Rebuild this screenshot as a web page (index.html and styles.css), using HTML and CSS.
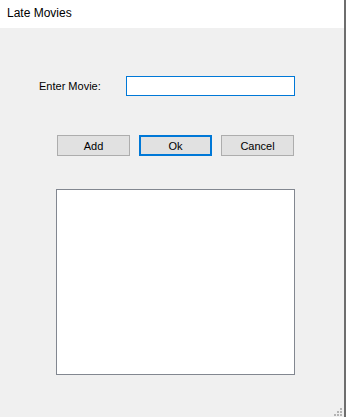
FILE: index.html
```html
<!doctype html>
<html>
<head>
    <meta charset="UTF-8">
    <meta name="viewport" content="width=device-width, initial-scale=1.0">
    <title>Late Movies</title>
    <link rel="stylesheet" href="styles.css">
</head>
<body>
    <div class="window">
        <div class="titlebar">Late Movies</div>
        <div class="content">
            <div class="field">
                <label for="movie" class="label">Enter Movie:</label>
                <input type="text" id="movie" class="input">
            </div>
            <div class="buttons">
                <button type="button" class="btn">Add</button>
                <button type="button" class="btn default">Ok</button>
                <button type="button" class="btn">Cancel</button>
            </div>
            <div class="list"></div>
        </div>
        <div class="grip">
            <span class="dot d1"></span>
            <span class="dot d2"></span>
            <span class="dot d3"></span>
            <span class="dot d4"></span>
            <span class="dot d5"></span>
            <span class="dot d6"></span>
        </div>
    </div>
</body>
</html>
```

FILE: styles.css
```css
body {
    margin: 0;
    background: #f0f0f0;
    font-family: "Liberation Sans", Arial, sans-serif;
    font-size: 11px;
    color: #000;
}

.window {
    position: relative;
    width: 346px;
    height: 417px;
    box-sizing: border-box;
    border-right: 2px solid #6e6e6e;
    background: #f0f0f0;
    overflow: hidden;
}

.titlebar {
    height: 28px;
    line-height: 26px;
    padding-left: 7px;
    background: #fff;
    font-size: 12px;
}

.content {
    padding-top: 48px;
}

.field {
    display: flex;
    align-items: center;
    height: 20px;
    padding-left: 39px;
}

.field .label {
    width: 87px;
}

.field .input {
    width: 169px;
    height: 20px;
    box-sizing: border-box;
    margin: 0;
    border: 1px solid #0078d7;
    background: #fff;
    outline: none;
    font: inherit;
}

.buttons {
    display: flex;
    gap: 9px;
    margin-top: 39px;
    padding-left: 57px;
}

.buttons .btn {
    width: 73px;
    height: 21px;
    box-sizing: border-box;
    margin: 0;
    padding: 0;
    border: 1px solid #adadad;
    background: #e1e1e1;
    font: inherit;
    color: #000;
}

.buttons .btn.default {
    border: 2px solid #0078d7;
}

.list {
    width: 239px;
    height: 186px;
    box-sizing: border-box;
    margin: 33px 0 0 56px;
    border: 1px solid #828790;
    background: #fff;
}

.grip {
    position: absolute;
    right: 0;
    bottom: 0;
    width: 12px;
    height: 12px;
}

.grip .dot {
    position: absolute;
    width: 2px;
    height: 2px;
    background: #b4b4b4;
}

.grip .d1 { left: 8px; top: 3px; }
.grip .d2 { left: 5px; top: 6px; }
.grip .d3 { left: 8px; top: 6px; }
.grip .d4 { left: 2px; top: 9px; }
.grip .d5 { left: 5px; top: 9px; }
.grip .d6 { left: 8px; top: 9px; }
```
